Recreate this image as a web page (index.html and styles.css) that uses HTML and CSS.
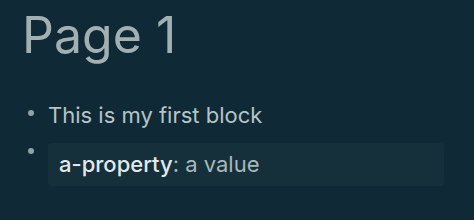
FILE: index.html
```html
<!DOCTYPE html>
<html>
<head>
<meta charset="utf-8">
<link rel="stylesheet" href="styles.css">
</head>
<body>
<div class="page">
  <h1 class="title">Page 1</h1>
  <div class="blocks">
    <div class="block">
      <div class="bullet-wrap"><span class="bullet"></span></div>
      <div class="content">This is my first block</div>
    </div>
    <div class="block">
      <div class="bullet-wrap"><span class="bullet"></span></div>
      <div class="content">
        <div class="props"><span class="key">a-property</span><span class="sep">:</span> <span class="val">a value</span></div>
      </div>
    </div>
  </div>
</div>
</body>
</html>
```
FILE: styles.css
```css
html, body {
  margin: 0;
  padding: 0;
  background: #0f2a36;
  height: 100%;
}
body {
  font-family: Inter, "Noto Sans", sans-serif;
  color: #b6c4c6;
}
.page {
  padding: 5px 30px 0 20px;
}
.title {
  margin: 0 0 34px 0;
  padding-left: 2px;
  font-size: 50px;
  font-weight: 400;
  line-height: 60px;
  color: #a3b0b2;
  letter-spacing: 0;
}
.blocks {
  display: flex;
  flex-direction: column;
  gap: 6px;
}
.block {
  display: flex;
  align-items: flex-start;
}
.bullet-wrap {
  width: 28px;
  flex: none;
  padding-top: 11px;
  display: flex;
  padding-left: 8px;
  box-sizing: border-box;
}
.bullet {
  width: 6px;
  height: 6px;
  border-radius: 50%;
  background: #8ea2a7;
}
.content {
  flex: 1;
  font-size: 22px;
  line-height: 32px;
}
.props {
  margin-top: 6px;
  background: #152f3b;
  border-radius: 3px;
  padding: 5px 10px 6px 11px;
}
.key {
  color: #e2e9ea;
  font-weight: 500;
}
.sep, .val {
  color: #a8b8bb;
}
```
